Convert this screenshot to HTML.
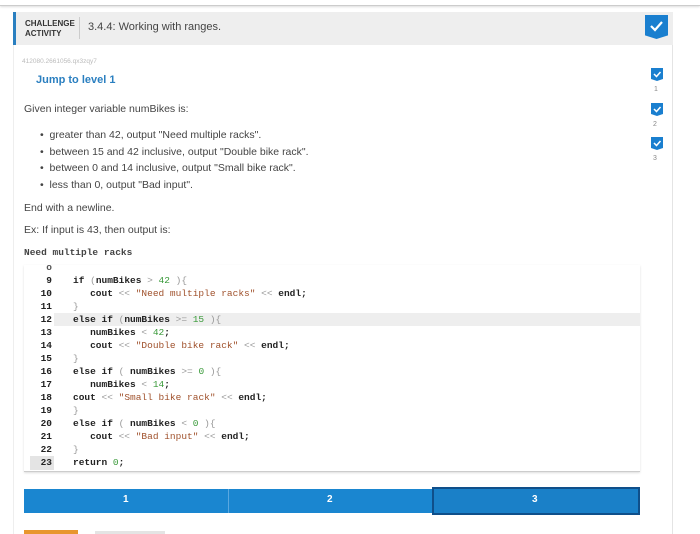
<!DOCTYPE html>
<html><head><meta charset="utf-8"><style>
*{margin:0;padding:0;box-sizing:border-box}
body{width:700px;height:534px;background:#fff;position:relative;overflow:hidden;font-family:"Liberation Sans",sans-serif;color:#333}
.a{position:absolute;white-space:nowrap}
.t{font-size:10.5px;color:#444}
.code{font-family:"Liberation Mono",monospace;font-size:9.5px;color:#222;font-weight:bold}
.ln{position:absolute;left:32px;width:20px;text-align:right}
.cl{position:absolute;left:73px}
.g{color:#3a9a3a;font-weight:normal}
.s{color:#a0522d;font-weight:normal}
.o{color:#999;font-weight:normal}
.chk{position:absolute;background:#1a7fcf}
.chk svg{position:absolute}
</style></head><body>
<div class="a" style="left:0;top:0;width:700px;height:6px;border-bottom:1px solid #ccc;box-shadow:0 1px 2px #ddd"></div>
<div class="a" style="left:13px;top:12px;width:660px;height:522px;border-right:1px solid #e4e4e4;border-left:1px solid #eee"></div>
<div class="a" style="left:13px;top:12px;width:660px;height:33px;background:#eeeeee;border-left:3px solid #2a7fc0"></div>
<div class="a" style="left:25px;top:19px;font-size:8px;font-weight:bold;line-height:10px;color:#333">CHALLENGE<br>ACTIVITY</div>
<div class="a" style="left:79px;top:17px;width:1px;height:22px;background:#ccc"></div>
<div class="a" style="left:88px;top:21px;font-size:11px;color:#444">3.4.4: Working with ranges.</div>
<div class="chk" style="left:645px;top:15px;width:23px;height:24px;clip-path:polygon(0 0,100% 0,100% 85%,50% 100%,0 85%)"><svg width="23" height="22" viewBox="0 0 23 22"><path d="M6 11 L10 15 L17 7" stroke="#fff" stroke-width="2.2" fill="none"/></svg></div>
<div class="a" style="left:22px;top:58px;font-size:6.5px;color:#bbb">412080.2661056.qx3zqy7</div>
<div class="a" style="left:36px;top:74px;font-size:11px;font-weight:bold;color:#2a7fc0">Jump to level 1</div>
<div class="chk" style="left:651px;top:68px;width:12px;height:13px;clip-path:polygon(0 0,100% 0,100% 85%,50% 100%,0 85%)"><svg width="12" height="12"><path d="M3 6 L5.5 8.5 L9.5 4" stroke="#fff" stroke-width="1.5" fill="none"/></svg></div>
<div class="a" style="left:654px;top:86px;font-size:7px;color:#888">1</div>
<div class="chk" style="left:651px;top:103px;width:12px;height:13px;clip-path:polygon(0 0,100% 0,100% 85%,50% 100%,0 85%)"><svg width="12" height="12"><path d="M3 6 L5.5 8.5 L9.5 4" stroke="#fff" stroke-width="1.5" fill="none"/></svg></div>
<div class="a" style="left:653px;top:121px;font-size:7px;color:#888">2</div>
<div class="chk" style="left:651px;top:137px;width:12px;height:13px;clip-path:polygon(0 0,100% 0,100% 85%,50% 100%,0 85%)"><svg width="12" height="12"><path d="M3 6 L5.5 8.5 L9.5 4" stroke="#fff" stroke-width="1.5" fill="none"/></svg></div>
<div class="a" style="left:653px;top:155px;font-size:7px;color:#888">3</div>
<div class="a t" style="left:24px;top:103px">Given integer variable numBikes is:</div>
<div class="a t" style="left:40px;top:127px;line-height:16.7px">• &nbsp;greater than 42, output "Need multiple racks".<br>• &nbsp;between 15 and 42 inclusive, output "Double bike rack".<br>• &nbsp;between 0 and 14 inclusive, output "Small bike rack".<br>• &nbsp;less than 0, output "Bad input".</div>
<div class="a t" style="left:24px;top:202px">End with a newline.</div>
<div class="a t" style="left:24px;top:224px">Ex: If input is 43, then output is:</div>
<div class="a code" style="left:24px;top:247px;color:#444">Need multiple racks</div>
<div class="a" style="left:24px;top:265px;width:616px;height:207px;border-bottom:1px solid #ccc;box-shadow:0 1px 2px #ddd"></div>
<div class="a" style="left:54px;top:313px;width:586px;height:13px;background:#eee"></div>
<div class="a" style="left:30px;top:456px;width:24px;height:14px;background:#e4e4e4"></div>
<div class="a code" style="left:0;top:262px;width:640px;line-height:12.95px">
<div class="ln" style="top:0;color:#555">o</div>
<div class="ln" style="top:13px">9</div><div class="cl" style="top:13px">if <span class="o">(</span>numBikes <span class="o">&gt;</span> <span class="g">42</span> <span class="o">){</span></div>
<div class="ln" style="top:26px">10</div><div class="cl" style="top:26px">&nbsp;&nbsp;&nbsp;cout <span class="o">&lt;&lt;</span> <span class="s">"Need multiple racks"</span> <span class="o">&lt;&lt;</span> endl;</div>
<div class="ln" style="top:39px">11</div><div class="cl o" style="top:39px">}</div>
<div class="ln" style="top:52px">12</div><div class="cl" style="top:52px">else if <span class="o">(</span>numBikes <span class="o">&gt;=</span> <span class="g">15</span> <span class="o">){</span></div>
<div class="ln" style="top:65px">13</div><div class="cl" style="top:65px">&nbsp;&nbsp;&nbsp;numBikes <span class="o">&lt;</span> <span class="g">42</span>;</div>
<div class="ln" style="top:78px">14</div><div class="cl" style="top:78px">&nbsp;&nbsp;&nbsp;cout <span class="o">&lt;&lt;</span> <span class="s">"Double bike rack"</span> <span class="o">&lt;&lt;</span> endl;</div>
<div class="ln" style="top:91px">15</div><div class="cl o" style="top:91px">}</div>
<div class="ln" style="top:104px">16</div><div class="cl" style="top:104px">else if <span class="o">(</span> numBikes <span class="o">&gt;=</span> <span class="g">0</span> <span class="o">){</span></div>
<div class="ln" style="top:117px">17</div><div class="cl" style="top:117px">&nbsp;&nbsp;&nbsp;numBikes <span class="o">&lt;</span> <span class="g">14</span>;</div>
<div class="ln" style="top:130px">18</div><div class="cl" style="top:130px">cout <span class="o">&lt;&lt;</span> <span class="s">"Small bike rack"</span> <span class="o">&lt;&lt;</span> endl;</div>
<div class="ln" style="top:143px">19</div><div class="cl o" style="top:143px">}</div>
<div class="ln" style="top:156px">20</div><div class="cl" style="top:156px">else if <span class="o">(</span> numBikes <span class="o">&lt;</span> <span class="g">0</span> <span class="o">){</span></div>
<div class="ln" style="top:169px">21</div><div class="cl" style="top:169px">&nbsp;&nbsp;&nbsp;cout <span class="o">&lt;&lt;</span> <span class="s">"Bad input"</span> <span class="o">&lt;&lt;</span> endl;</div>
<div class="ln" style="top:182px">22</div><div class="cl o" style="top:182px">}</div>
<div class="ln" style="top:195px">23</div><div class="cl" style="top:195px">return <span class="g">0</span>;</div>
</div>
<div class="a" style="left:24px;top:489px;width:409px;height:24px;background:#1a86d0"></div>
<div class="a" style="left:228px;top:489px;width:1px;height:24px;background:#5aa8e0"></div>
<div class="a" style="left:432px;top:487px;width:208px;height:28px;background:#1a80c8;border:2px solid #0f4f8a"></div>
<div class="a" style="left:123px;top:494px;font-size:10px;font-weight:bold;color:#fff">1</div>
<div class="a" style="left:327px;top:494px;font-size:10px;font-weight:bold;color:#fff">2</div>
<div class="a" style="left:532px;top:494px;font-size:10px;font-weight:bold;color:#fff">3</div>
<div class="a" style="left:24px;top:530px;width:54px;height:4px;background:#e8962e"></div>
<div class="a" style="left:95px;top:531px;width:70px;height:3px;background:#e4e4e4"></div>
</body></html>
